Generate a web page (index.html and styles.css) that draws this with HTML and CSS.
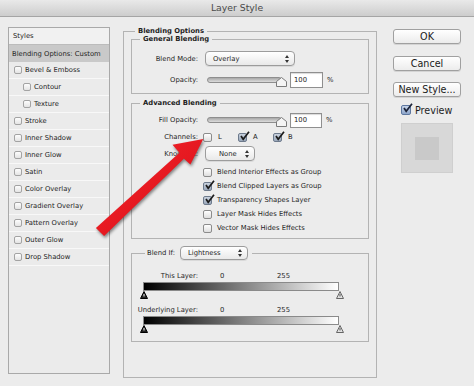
FILE: index.html
```html
<!DOCTYPE html>
<html lang="en">
<head>
  <meta charset="UTF-8">
  <title>Layer Style</title>
  <link rel="stylesheet" href="styles.css">
</head>
<body>
  <div class="titlebar">Layer Style</div>

  <div class="dialog">
    <div class="styles-list">
      <div class="list-head">Styles</div>
      <div class="list-item selected">Blending Options: Custom</div>
      <div class="list-item"><span class="cb"></span>Bevel &amp; Emboss</div>
      <div class="list-item sub"><span class="cb"></span>Contour</div>
      <div class="list-item sub"><span class="cb"></span>Texture</div>
      <div class="list-item"><span class="cb"></span>Stroke</div>
      <div class="list-item"><span class="cb"></span>Inner Shadow</div>
      <div class="list-item"><span class="cb"></span>Inner Glow</div>
      <div class="list-item"><span class="cb"></span>Satin</div>
      <div class="list-item"><span class="cb"></span>Color Overlay</div>
      <div class="list-item"><span class="cb"></span>Gradient Overlay</div>
      <div class="list-item"><span class="cb"></span>Pattern Overlay</div>
      <div class="list-item"><span class="cb"></span>Outer Glow</div>
      <div class="list-item"><span class="cb"></span>Drop Shadow</div>
    </div>

    <fieldset class="group outer">
      <legend>Blending Options</legend>

      <fieldset class="group general">
        <legend>General Blending</legend>
        <div class="row">
          <span class="label">Blend Mode:</span>
          <div class="select mode">Overlay
            <svg width="4" height="8" viewBox="0 0 4 8"><path d="M0 3 L2 0 L4 3 Z M0 5 L2 8 L4 5 Z" fill="#333"/></svg>
          </div>
        </div>
        <div class="row tall">
          <span class="label">Opacity:</span>
          <div class="slider">
            <span class="track"></span>
            <svg class="thumb" width="11" height="10" viewBox="0 0 11 10"><path d="M5.5 0.5 L10.5 4.5 L10.5 9.5 L0.5 9.5 L0.5 4.5 Z" fill="#f4f4f4" stroke="#7a7a7a"/></svg>
          </div>
          <div class="num">100</div>
          <span class="pct">%</span>
        </div>
      </fieldset>

      <fieldset class="group advanced">
        <legend>Advanced Blending</legend>
        <div class="row tall">
          <span class="label">Fill Opacity:</span>
          <div class="slider">
            <span class="track"></span>
            <svg class="thumb" width="11" height="10" viewBox="0 0 11 10"><path d="M5.5 0.5 L10.5 4.5 L10.5 9.5 L0.5 9.5 L0.5 4.5 Z" fill="#f4f4f4" stroke="#7a7a7a"/></svg>
          </div>
          <div class="num short">100</div>
          <span class="pct">%</span>
        </div>
        <div class="row channels">
          <span class="label">Channels:</span>
          <span class="check"></span><span class="ch">L</span>
          <span class="check on"><svg width="11" height="11" viewBox="0 0 11 11"><path d="M2 5 L4.2 8.2 L10 0.8" fill="none" stroke="#1b1b1b" stroke-width="1.7"/></svg></span><span class="ch">A</span>
          <span class="check on"><svg width="11" height="11" viewBox="0 0 11 11"><path d="M2 5 L4.2 8.2 L10 0.8" fill="none" stroke="#1b1b1b" stroke-width="1.7"/></svg></span><span class="ch">B</span>
        </div>
        <div class="row">
          <span class="label">Knockout:</span>
          <div class="select knock">None
            <svg width="4" height="8" viewBox="0 0 4 8"><path d="M0 3 L2 0 L4 3 Z M0 5 L2 8 L4 5 Z" fill="#333"/></svg>
          </div>
        </div>
        <div class="checks">
          <div class="check-row"><span class="check"></span>Blend Interior Effects as Group</div>
          <div class="check-row"><span class="check on"><svg width="11" height="11" viewBox="0 0 11 11"><path d="M2 5 L4.2 8.2 L10 0.8" fill="none" stroke="#1b1b1b" stroke-width="1.7"/></svg></span>Blend Clipped Layers as Group</div>
          <div class="check-row"><span class="check on"><svg width="11" height="11" viewBox="0 0 11 11"><path d="M2 5 L4.2 8.2 L10 0.8" fill="none" stroke="#1b1b1b" stroke-width="1.7"/></svg></span>Transparency Shapes Layer</div>
          <div class="check-row"><span class="check"></span>Layer Mask Hides Effects</div>
          <div class="check-row"><span class="check"></span>Vector Mask Hides Effects</div>
        </div>
      </fieldset>

      <fieldset class="group blendif">
        <legend>
          <span class="bi-label">Blend If:</span>
          <span class="select light">Lightness
            <svg width="4" height="8" viewBox="0 0 4 8"><path d="M0 3 L2 0 L4 3 Z M0 5 L2 8 L4 5 Z" fill="#333"/></svg>
          </span>
        </legend>

        <div class="range-head">
          <span class="label">This Layer:</span>
          <span class="v0">0</span>
          <span>255</span>
        </div>
        <div class="ramp"></div>
        <div class="ramp-thumbs">
          <svg width="8" height="8" viewBox="0 0 8 8"><path d="M4 0.5 L7.5 7.5 L0.5 7.5 Z" fill="#222" stroke="#000"/><path d="M4 3 V5.5" stroke="#fff"/></svg>
          <svg width="8" height="8" viewBox="0 0 8 8"><path d="M4 0.5 L7.5 7.5 L0.5 7.5 Z" fill="#e2e2e2" stroke="#666"/><path d="M4 3 V5.5" stroke="#555"/></svg>
        </div>

        <div class="range-head second">
          <span class="label">Underlying Layer:</span>
          <span class="v0">0</span>
          <span>255</span>
        </div>
        <div class="ramp"></div>
        <div class="ramp-thumbs">
          <svg width="8" height="8" viewBox="0 0 8 8"><path d="M4 0.5 L7.5 7.5 L0.5 7.5 Z" fill="#222" stroke="#000"/><path d="M4 3 V5.5" stroke="#fff"/></svg>
          <svg width="8" height="8" viewBox="0 0 8 8"><path d="M4 0.5 L7.5 7.5 L0.5 7.5 Z" fill="#e2e2e2" stroke="#666"/><path d="M4 3 V5.5" stroke="#555"/></svg>
        </div>
      </fieldset>
    </fieldset>

    <div class="side">
      <button class="btn">OK</button>
      <button class="btn cancel">Cancel</button>
      <button class="btn new">New Style...</button>
      <div class="preview-check">
        <span class="check on big"><svg width="11" height="11" viewBox="0 0 11 11"><path d="M2 5 L4.2 8.2 L10 0.8" fill="none" stroke="#1b2338" stroke-width="1.7"/></svg></span>
        Preview
      </div>
      <div class="preview-box"><div class="preview-inner"></div></div>
    </div>
  </div>

  <!-- annotation arrow pointing at the L channel -->
  <svg class="arrow" width="474" height="386" viewBox="0 0 474 386">
    <defs>
      <linearGradient id="red" x1="0" y1="0" x2="1" y2="1">
        <stop offset="0" stop-color="#f5262c"/>
        <stop offset="1" stop-color="#d80d16"/>
      </linearGradient>
    </defs>
    <polygon points="95.9,227.9 179.4,152.7 172.5,144.8 203.3,139 190.4,164.4 183.9,158.8 104.1,236.1" fill="url(#red)"/>
  </svg>
</body>
</html>
```

FILE: styles.css
```css
body {
  margin: 0;
  width: 474px;
  height: 386px;
  overflow: hidden;
  position: relative;
  background-color: #ececec;
  font-family: "DejaVu Sans", sans-serif;
  font-size: 6.8px;
  color: #1e1e1e;
}

.titlebar {
  height: 16px;
  line-height: 16px;
  text-align: center;
  font-size: 9.3px;
  color: #4a4a4a;
  background: linear-gradient(#e9e9e9, #cdcdcd);
  border-bottom: 1px solid #a5a5a5;
}

.dialog {
  display: flex;
  align-items: flex-start;
  padding: 10px 0 0 8px;
}

/* left styles list */
.styles-list {
  width: 102px;
  height: 347px;
  box-sizing: border-box;
  border: 1px solid #a9a9a9;
  background-color: #ebebeb;
  margin-right: 13px;
}

.list-head {
  height: 16px;
  line-height: 16px;
  padding-left: 4px;
  background-color: #f1f1f1;
  border-bottom: 1px solid #bcbcbc;
}

.list-item {
  display: flex;
  align-items: center;
  height: 16px;
  padding-left: 5px;
  border-bottom: 1px solid #f8f8f8;
}

.list-item.selected {
  height: 17px;
  padding-left: 3px;
  background-color: #c9c9c9;
  border-bottom: none;
}

.list-item.sub {
  padding-left: 14px;
}

.cb {
  width: 6px;
  height: 6px;
  margin-right: 3px;
  border: 1px solid #a3a3a3;
  border-radius: 2px;
  background: linear-gradient(#fdfdfd, #e4e4e4);
}

/* fieldsets */
.group {
  margin: 0;
  padding: 0;
  min-width: 0;
  border: 1px solid #b3b3b3;
}

.group legend {
  font-weight: bold;
  line-height: 8px;
  padding: 0 3px;
}

.outer {
  width: 254px;
  height: 351px;
  box-sizing: border-box;
}

.outer > legend {
  margin-left: 11px;
}

.general,
.advanced,
.blendif {
  margin: 0 7px;
}

.general > legend,
.advanced > legend {
  margin-left: 8px;
}

.general {
  padding: 8px 0 5px;
}

.general .row + .row {
  margin-top: 6px;
}

.advanced {
  margin-top: 5px;
  padding: 5px 0 3px;
}

.row {
  display: flex;
  align-items: center;
  height: 15px;
}

.row.tall {
  height: 16px;
}

.advanced .row + .row {
  margin-top: 3px;
}

.row.channels {
  height: 12px;
}

.label {
  width: 66px;
  margin-right: 7px;
  text-align: right;
  flex-shrink: 0;
}

.select {
  display: flex;
  align-items: center;
  justify-content: space-between;
  height: 15px;
  box-sizing: border-box;
  padding: 0 5px 0 7px;
  border: 1px solid #9c9c9c;
  border-radius: 4px;
  background: linear-gradient(#ffffff, #e9e9e9);
  box-shadow: 0 1px 0 rgba(0, 0, 0, 0.08);
  font-weight: normal;
}

.select.mode {
  width: 90px;
}

.select.knock {
  width: 50px;
  padding-left: 13px;
}

.slider {
  display: flex;
  align-items: center;
  width: 82px;
  margin-right: 3px;
}

.track {
  flex: 1;
  height: 4px;
  margin-left: 2px;
  border: 1px solid #8e8e8e;
  border-radius: 3px;
  background: linear-gradient(#a8a8a8, #dcdcdc);
}

.thumb {
  margin-left: -6px;
  margin-top: 3px;
}

.num {
  width: 33px;
  height: 16px;
  box-sizing: border-box;
  padding-left: 3px;
  line-height: 14px;
  border: 1px solid #8f8f8f;
  background-color: #fff;
  box-shadow: inset 0 1px 1px rgba(0, 0, 0, 0.15);
}

.num.short {
  width: 32px;
  height: 15px;
  line-height: 13px;
}

.pct {
  margin-left: 4px;
}

.check {
  position: relative;
  width: 7px;
  height: 7px;
  flex-shrink: 0;
  border: 1px solid #8c8c8c;
  border-radius: 2px;
  background: linear-gradient(#ffffff, #dedede);
}

.check.on {
  background: linear-gradient(#c9d2de, #9aa8bb);
  border-color: #6d7a8c;
}

.check svg {
  position: absolute;
  left: 0;
  top: -3px;
}

.channels .check {
  margin-left: -2px;
}

.ch {
  width: 22px;
  padding-left: 6px;
}

.checks {
  margin-top: 4px;
}

.check-row {
  display: flex;
  align-items: center;
  height: 14px;
  padding-left: 71px;
}

.check-row .check {
  margin-right: 5px;
}

/* blend if */
.blendif {
  margin-top: 7px;
  padding: 11px 0 8px;
}

.blendif > legend {
  display: flex;
  align-items: center;
  line-height: 14px;
  margin-left: 13px;
  padding: 0 4px 0 2px;
  font-weight: normal;
}

.bi-label {
  width: 33px;
}

.select.light {
  width: 68px;
  height: 14px;
}

.range-head {
  display: flex;
  height: 10px;
  line-height: 10px;
}

.range-head.second {
  margin-top: 6px;
}

.v0 {
  width: 57px;
  margin-left: 15px;
}

.ramp {
  width: 196px;
  height: 9px;
  box-sizing: border-box;
  margin: 1px 0 0 11px;
  border: 1px solid #8a8a8a;
  background: linear-gradient(to right, #000, #333 20%, #fff);
}

.ramp-thumbs {
  display: flex;
  justify-content: space-between;
  width: 204px;
  height: 8px;
  margin-left: 8px;
}

/* right column */
.side {
  display: flex;
  flex-direction: column;
  width: 68px;
  margin-left: 16px;
  padding-top: 2px;
}

.btn {
  height: 15px;
  padding: 0;
  font-family: "DejaVu Sans", sans-serif;
  font-size: 9.6px;
  color: #1a1a1a;
  border: 1px solid #a0a0a0;
  border-radius: 3px;
  background: linear-gradient(#ffffff, #ececec);
  box-shadow: 0 1px 0 rgba(0, 0, 0, 0.1);
}

.btn.cancel {
  margin-top: 12px;
}

.btn.new {
  margin-top: 11px;
}

.preview-check {
  display: flex;
  align-items: center;
  height: 10px;
  margin-top: 8px;
  padding-left: 8px;
  font-size: 9.6px;
}

.check.big {
  width: 8px;
  height: 8px;
  margin-right: 4px;
  background: linear-gradient(#c5d3e8, #8ea6cb);
  border-color: #5d77a0;
}

.preview-box {
  display: flex;
  align-items: center;
  justify-content: center;
  width: 52px;
  height: 50px;
  box-sizing: border-box;
  margin: 8px 0 0 8px;
  border: 1px solid #cfcfcf;
  background-color: #d8d8d8;
}

.preview-inner {
  width: 24px;
  height: 23px;
  background-color: #c9c9c9;
}

.arrow {
  position: absolute;
  left: 0;
  top: 0;
  pointer-events: none;
  filter: drop-shadow(1px 2px 1.5px rgba(0, 0, 0, 0.45));
}
```
